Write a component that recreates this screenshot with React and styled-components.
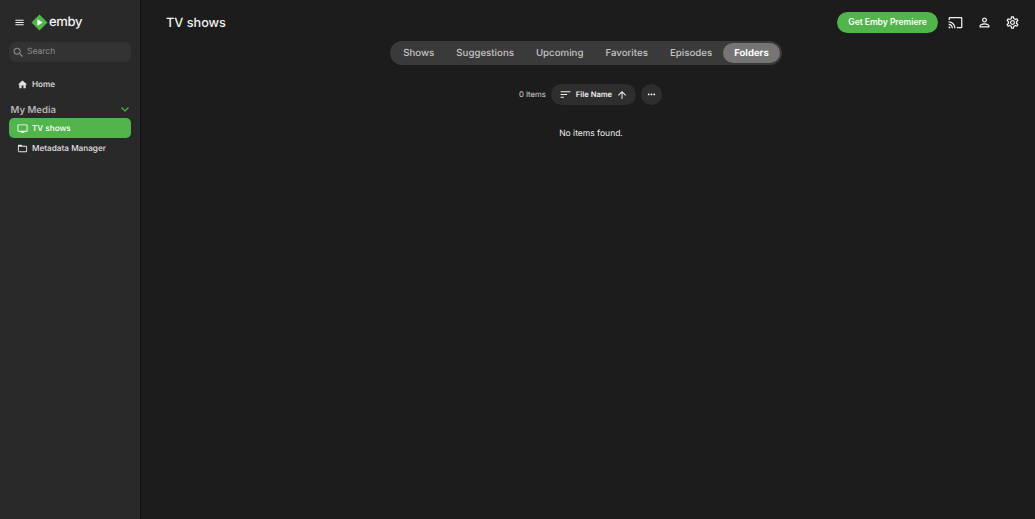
import React from "react";
import styled, { createGlobalStyle } from "styled-components";

const GlobalStyle = createGlobalStyle`
  html, body {
    margin: 0;
    height: 100%;
    background: #1c1c1c;
    font-family: Inter, "Liberation Sans", sans-serif;
    text-rendering: geometricPrecision;
    overflow: hidden;
  }
  * {
    box-sizing: border-box;
  }
`;

const Page = styled.div`
  display: flex;
  height: 519px;
`;

const Sidebar = styled.aside`
  width: 141px;
  flex-shrink: 0;
  background: #292929;
  border-right: 1px solid #111;
  padding: 0 9px;
`;

const Brand = styled.div`
  display: flex;
  align-items: center;
  height: 42px;
  padding: 2px 0 0 5px;
  gap: 6px;
`;

const MenuIcon = styled.span`
  display: flex;
  color: #f2f2f2;
`;

const Logo = styled.div`
  display: flex;
  align-items: center;
  gap: 1px;
  color: #f2f2f2;
  font-size: 13px;
  font-weight: 500;
  letter-spacing: -0.3px;
`;

const SearchBox = styled.div`
  display: flex;
  align-items: center;
  gap: 2px;
  height: 20px;
  padding-left: 3px;
  border-radius: 6px;
  background: #333;
  color: #8c8c8c;
  font-size: 8.5px;
`;

const NavItem = styled.div`
  display: flex;
  align-items: center;
  gap: 4px;
  height: 20px;
  padding-left: 8px;
  border-radius: 5px;
  font-size: 8.2px;
  font-weight: 500;
  color: ${(p) => (p.$active ? "#fff" : "#e2e2e2")};
  background: ${(p) => (p.$active ? "#52b54b" : "transparent")};
`;

const HomeWrap = styled.div`
  margin-top: 12px;
`;

const SectionHead = styled.div`
  display: flex;
  align-items: center;
  justify-content: space-between;
  height: 18px;
  margin-top: 6px;
  padding: 2px 0 0 1.5px;
  font-size: 9.6px;
  font-weight: 600;
  color: #b4b4b4;
`;

const ChevronMark = styled.svg`
  margin-top: -3px;
`;

const Main = styled.main`
  flex: 1;
  min-width: 0;
  display: flex;
  flex-direction: column;
`;

const TopBar = styled.header`
  display: flex;
  align-items: center;
  justify-content: space-between;
  height: 44px;
  padding: 0 15px 0 25px;
`;

const Title = styled.h1`
  margin: 2px 0 0;
  font-size: 12.7px;
  font-weight: 500;
  color: #f2f2f2;
`;

const Actions = styled.div`
  display: flex;
  align-items: center;
  gap: 13.5px;
`;

const PremiereButton = styled.button`
  height: 21px;
  width: 101px;
  margin-right: -3.5px;
  padding: 0;
  border: 0;
  border-radius: 11px;
  background: #52b54b;
  color: #fff;
  font: 600 8.5px Inter, sans-serif;
`;

const ActionIcon = styled.span`
  display: flex;
  width: 15px;
  height: 15px;
  color: #f2f2f2;
`;

const TabRow = styled.div`
  display: flex;
  justify-content: center;
  margin-top: -3px;
  padding-right: 4px;
`;

const Tabs = styled.nav`
  display: flex;
  align-items: center;
  height: 24px;
  padding: 0 2px;
  border-radius: 12px;
  background: #3a3a3a;
`;

const Tab = styled.span`
  display: flex;
  align-items: center;
  height: 20px;
  padding: 0 11px;
  border-radius: 10px;
  font-size: ${(p) => (p.$active ? "9.5px" : "9.7px")};
  font-weight: ${(p) => (p.$active ? 700 : 500)};
  color: ${(p) => (p.$active ? "#fff" : "#c4c4c4")};
  background: ${(p) => (p.$active ? "#757575" : "transparent")};
`;

const Toolbar = styled.div`
  display: flex;
  align-items: center;
  justify-content: center;
  gap: 5px;
  margin-top: 19px;
  height: 21px;
  padding-left: 5px;
`;

const Count = styled.span`
  font-size: 7.7px;
  color: #d4d4d4;
`;

const SortButton = styled.div`
  display: flex;
  align-items: center;
  gap: 4px;
  height: 21px;
  padding: 0 8px;
  border-radius: 11px;
  background: #2e2e2e;
  color: #f0f0f0;
  font-size: 7.6px;
  font-weight: 600;
`;

const MoreButton = styled.div`
  display: flex;
  align-items: center;
  justify-content: center;
  width: 21px;
  height: 21px;
  border-radius: 50%;
  background: #2e2e2e;
  color: #f0f0f0;
`;

const Empty = styled.p`
  margin: 24px 0 0;
  padding-left: 6px;
  text-align: center;
  font-size: 8.5px;
  line-height: 11px;
  color: #ececec;
`;

const Icon = ({ d, size = 24, fill = "currentColor" }) => (
  <svg width={size} height={size} viewBox="0 0 24 24" fill={fill}>
    <path d={d} />
  </svg>
);

const icons = {
  menu: "M3 18h18v-2H3v2zm0-5h18v-2H3v2zm0-7v2h18V6H3z",
  search:
    "M15.5 14h-.79l-.28-.27A6.47 6.47 0 0 0 16 9.5 6.5 6.5 0 1 0 9.5 16c1.61 0 3.09-.59 4.23-1.57l.27.28v.79l5 4.99L20.49 19l-4.99-5zm-6 0C7.01 14 5 11.99 5 9.5S7.01 5 9.5 5 14 7.01 14 9.5 11.99 14 9.5 14z",
  home: "M10 20v-6h4v6h5v-8h3L12 3 2 12h3v8z",
  tv: "M21 3H3c-1.1 0-2 .9-2 2v12c0 1.1.9 2 2 2h5v2h8v-2h5c1.1 0 2-.9 2-2V5c0-1.1-.9-2-2-2zm0 14H3V5h18v12z",
  folder:
    "M20 6h-8l-2-2H4c-1.1 0-2 .9-2 2v12c0 1.1.9 2 2 2h16c1.1 0 2-.9 2-2V8c0-1.1-.9-2-2-2zm0 12H4V8h16v10z",
  sort: "M3 18h6v-2H3v2zM3 6v2h18V6H3zm0 7h12v-2H3v2z",
  up: "M4 12l1.41 1.41L11 7.83V20h2V7.83l5.58 5.59L20 12l-8-8-8 8z",
  more: "M6 10c-1.1 0-2 .9-2 2s.9 2 2 2 2-.9 2-2-.9-2-2-2zm12 0c-1.1 0-2 .9-2 2s.9 2 2 2 2-.9 2-2-.9-2-2-2zm-6 0c-1.1 0-2 .9-2 2s.9 2 2 2 2-.9 2-2-.9-2-2-2z",
  cast: "M21 3H3c-1.1 0-2 .9-2 2v3h2V5h18v14h-7v2h7c1.1 0 2-.9 2-2V5c0-1.1-.9-2-2-2zM1 18v3h3c0-1.66-1.34-3-3-3zm0-4v2c2.76 0 5 2.24 5 5h2c0-3.87-3.13-7-7-7zm0-4v2c4.97 0 9 4.03 9 9h2c0-6.08-4.93-11-11-11z",
  person:
    "M12 6c1.1 0 2 .9 2 2s-.9 2-2 2-2-.9-2-2 .9-2 2-2m0 9c2.7 0 5.8 1.29 6 2v1H6v-.99c.2-.72 3.3-2.01 6-2.01M12 4C9.79 4 8 5.79 8 8s1.79 4 4 4 4-1.79 4-4-1.79-4-4-4zm0 9c-2.67 0-8 1.34-8 4v3h16v-3c0-2.66-5.33-4-8-4z",
  settings:
    "M19.43 12.98c.04-.32.07-.64.07-.98s-.03-.66-.07-.98l2.11-1.65c.19-.15.24-.42.12-.64l-2-3.46c-.12-.22-.39-.3-.61-.22l-2.49 1c-.52-.4-1.08-.73-1.69-.98l-.38-2.65A.488.488 0 0 0 14 2h-4c-.25 0-.46.18-.49.42l-.38 2.65c-.61.25-1.17.59-1.69.98l-2.49-1c-.23-.09-.49 0-.61.22l-2 3.46c-.13.22-.07.49.12.64l2.11 1.65c-.04.32-.07.65-.07.98s.03.66.07.98l-2.11 1.65c-.19.15-.24.42-.12.64l2 3.46c.12.22.39.3.61.22l2.49-1c.52.4 1.08.73 1.69.98l.38 2.65c.03.24.24.42.49.42h4c.25 0 .46-.18.49-.42l.38-2.65c.61-.25 1.17-.59 1.69-.98l2.49 1c.23.09.49 0 .61-.22l2-3.46c.12-.22.07-.49-.12-.64l-2.11-1.65zM17.45 11.27c.04.31.05.52.05.73 0 .21-.02.43-.05.73l-.14 1.13.89.7 1.08.84-.7 1.21-1.27-.51-1.04-.42-.9.68c-.43.32-.84.56-1.25.73l-1.06.43-.16 1.13-.2 1.35h-1.4l-.19-1.35-.16-1.13-1.06-.43c-.43-.18-.83-.41-1.23-.71l-.91-.7-1.06.43-1.27.51-.7-1.21 1.08-.84.89-.7-.14-1.13c-.03-.31-.05-.54-.05-.74s.02-.43.05-.73l.14-1.13-.89-.7-1.08-.84.7-1.21 1.27.51 1.04.42.9-.68c.43-.32.84-.56 1.25-.73l1.06-.43.16-1.13.2-1.35h1.39l.19 1.35.16 1.13 1.06.43c.43.18.83.41 1.23.71l.91.7 1.06-.43 1.27-.51.7 1.21-1.07.85-.89.7.14 1.13zM12 8c-2.21 0-4 1.79-4 4s1.79 4 4 4 4-1.79 4-4-1.79-4-4-4zm0 6c-1.1 0-2-.9-2-2s.9-2 2-2 2 .9 2 2-.9 2-2 2z",
};

const EmbyMark = () => (
  <svg width="17" height="17" viewBox="0 0 16 16">
    <path d="M8 .5 15.5 8 8 15.5.5 8z" fill="#52b54b" />
    <path d="M6 5v6l5-3z" fill="#fff" />
  </svg>
);

const Chevron = () => (
  <ChevronMark width="12" height="12" viewBox="0 0 12 12" fill="none" stroke="#52b54b" strokeWidth="1.2">
    <path d="M2.5 4.5 6 8l3.5-3.5" />
  </ChevronMark>
);

const tabs = ["Shows", "Suggestions", "Upcoming", "Favorites", "Episodes", "Folders"];

const App = () => (
  <>
    <GlobalStyle />
    <Page>
      <Sidebar>
        <Brand>
          <MenuIcon>
            <Icon d={icons.menu} size={11} />
          </MenuIcon>
          <Logo>
            <EmbyMark />
            emby
          </Logo>
        </Brand>
        <SearchBox>
          <Icon d={icons.search} size={13} />
          Search
        </SearchBox>
        <HomeWrap>
          <NavItem>
            <Icon d={icons.home} size={11} />
            Home
          </NavItem>
        </HomeWrap>
        <SectionHead>
          My Media
          <Chevron />
        </SectionHead>
        <NavItem $active>
          <Icon d={icons.tv} size={11} />
          TV shows
        </NavItem>
        <NavItem>
          <Icon d={icons.folder} size={11} />
          Metadata Manager
        </NavItem>
      </Sidebar>
      <Main>
        <TopBar>
          <Title>TV shows</Title>
          <Actions>
            <PremiereButton>Get Emby Premiere</PremiereButton>
            <ActionIcon>
              <Icon d={icons.cast} size={15} />
            </ActionIcon>
            <ActionIcon>
              <Icon d={icons.person} size={15} />
            </ActionIcon>
            <ActionIcon>
              <Icon d={icons.settings} size={15} />
            </ActionIcon>
          </Actions>
        </TopBar>
        <TabRow>
          <Tabs>
            {tabs.map((tab) => (
              <Tab key={tab} $active={tab === "Folders"}>
                {tab}
              </Tab>
            ))}
          </Tabs>
        </TabRow>
        <Toolbar>
          <Count>0 Items</Count>
          <SortButton>
            <Icon d={icons.sort} size={13} />
            File Name
            <Icon d={icons.up} size={12} />
          </SortButton>
          <MoreButton>
            <Icon d={icons.more} size={11} />
          </MoreButton>
        </Toolbar>
        <Empty>No items found.</Empty>
      </Main>
    </Page>
  </>
);

export default App;
